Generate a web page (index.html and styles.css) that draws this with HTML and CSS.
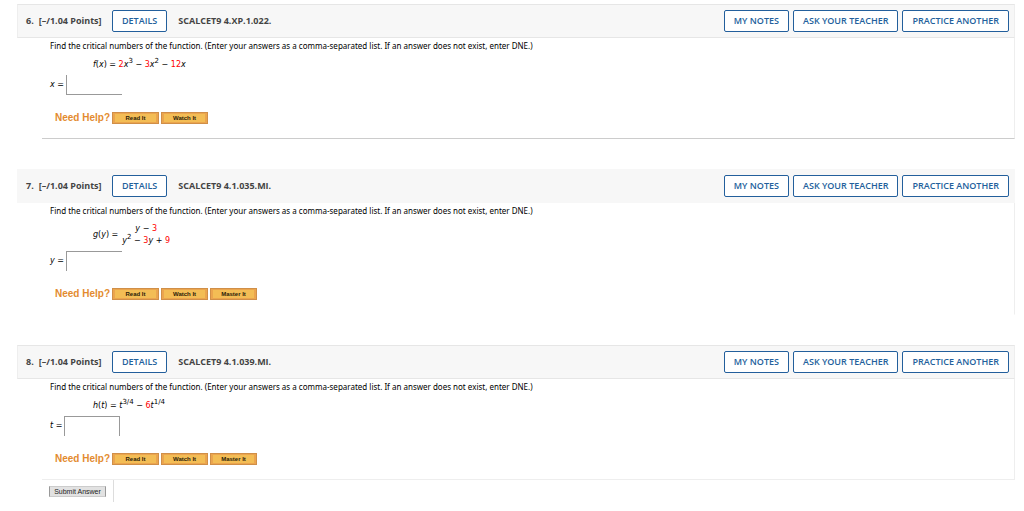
FILE: index.html
```html
<!DOCTYPE html>
<html lang="en">
  <head>
    <meta charset="UTF-8" />
    <meta name="viewport" content="width=device-width, initial-scale=1.0" />
    <title>Critical Numbers</title>
    <link rel="stylesheet" href="styles.css">
  </head>
  <body>
    <form class="assignment">
      <section class="question">
        <header class="question-header">
          <h2 class="points"><span class="number">6.</span>[–/1.04 Points]</h2>
          <button type="button" class="btn">DETAILS</button>
          <h3 class="source">SCALCET9 4.XP.1.022.</h3>
          <div class="actions">
            <button type="button" class="btn">MY NOTES</button>
            <button type="button" class="btn">ASK YOUR TEACHER</button>
            <button type="button" class="btn">PRACTICE ANOTHER</button>
          </div>
        </header>
        <div class="question-body line-dark">
          <p>Find the critical numbers of the function. (Enter your answers as a comma-separated list. If an answer does not exist, enter DNE.)</p>
          <div class="formula"><i>f</i>(<i>x</i>) = <b>2</b><i>x</i><sup>3</sup> − <b>3</b><i>x</i><sup>2</sup> − <b>12</b><i>x</i></div>
          <div class="answer">
            <label for="answer6"><i>x</i> =</label>
            <input type="text" id="answer6" class="edge-bottom" />
          </div>
          <div class="help">
            <span class="help-title">Need Help?</span>
            <button type="button" class="help-btn">Read It</button>
            <button type="button" class="help-btn">Watch It</button>
          </div>
        </div>
      </section>

      <section class="question">
        <header class="question-header no-line">
          <h2 class="points"><span class="number">7.</span>[–/1.04 Points]</h2>
          <button type="button" class="btn">DETAILS</button>
          <h3 class="source">SCALCET9 4.1.035.MI.</h3>
          <div class="actions">
            <button type="button" class="btn">MY NOTES</button>
            <button type="button" class="btn">ASK YOUR TEACHER</button>
            <button type="button" class="btn">PRACTICE ANOTHER</button>
          </div>
        </header>
        <div class="question-body line-none">
          <p>Find the critical numbers of the function. (Enter your answers as a comma-separated list. If an answer does not exist, enter DNE.)</p>
          <div class="formula formula-fraction">
            <span><i>g</i>(<i>y</i>) =</span>
            <span class="fraction">
              <span><i>y</i> − <b>3</b></span>
              <span><i>y</i><sup>2</sup> − <b>3</b><i>y</i> + <b>9</b></span>
            </span>
          </div>
          <div class="answer">
            <label for="answer7"><i>y</i> =</label>
            <input type="text" id="answer7" class="edge-top" />
          </div>
          <div class="help">
            <span class="help-title">Need Help?</span>
            <button type="button" class="help-btn">Read It</button>
            <button type="button" class="help-btn">Watch It</button>
            <button type="button" class="help-btn">Master It</button>
          </div>
        </div>
      </section>

      <section class="question">
        <header class="question-header">
          <h2 class="points"><span class="number">8.</span>[–/1.04 Points]</h2>
          <button type="button" class="btn">DETAILS</button>
          <h3 class="source">SCALCET9 4.1.039.MI.</h3>
          <div class="actions">
            <button type="button" class="btn">MY NOTES</button>
            <button type="button" class="btn">ASK YOUR TEACHER</button>
            <button type="button" class="btn">PRACTICE ANOTHER</button>
          </div>
        </header>
        <div class="question-body">
          <p>Find the critical numbers of the function. (Enter your answers as a comma-separated list. If an answer does not exist, enter DNE.)</p>
          <div class="formula"><i>h</i>(<i>t</i>) = <i>t</i><sup>3/4</sup> − <b>6</b><i>t</i><sup>1/4</sup></div>
          <div class="answer">
            <label for="answer8"><i>t</i> =</label>
            <input type="text" id="answer8" class="edge-top edge-right" />
          </div>
          <div class="help">
            <span class="help-title">Need Help?</span>
            <button type="button" class="help-btn">Read It</button>
            <button type="button" class="help-btn">Watch It</button>
            <button type="button" class="help-btn">Master It</button>
          </div>
        </div>
        <div class="submit">
          <button type="submit" class="submit-btn">Submit Answer</button>
        </div>
      </section>
    </form>
  </body>
</html>
```
FILE: styles.css
```css
* {
  padding: 0;
  margin: 0;
  box-sizing: border-box;
}

body {
  padding: 4px 9px 8px 17px;
  background: #fff;
  color: #000;
  font-family: "Noto Sans", Verdana, sans-serif;
  font-size: 8px;
  line-height: 12px;
}

.assignment {
  display: flex;
  flex-direction: column;
  gap: 30px;
}

.question-header {
  display: flex;
  align-items: center;
  height: 34px;
  padding: 0 5px 0 8px;
  background: #f7f7f7;
  border: 1px solid #e6e6e6;
  border-left-color: #eee;
  border-right-color: #eee;
  font-family: "Open Sans", sans-serif;
  color: #444;
}

.question-header.no-line {
  border-color: #f7f7f7;
}

.points,
.source {
  font-size: 9px;
  font-weight: 700;
}

.points {
  width: 86px;
}

.number {
  margin-right: 5px;
}

.btn {
  height: 22px;
  padding: 0 9px;
  background: #fff;
  border: 1px solid #235f9c;
  border-radius: 2px;
  color: #235f9c;
  font-family: "Open Sans", sans-serif;
  font-size: 9px;
  font-weight: 600;
  line-height: 18px;
  cursor: pointer;
}

.source {
  margin-left: 11px;
}

.actions {
  display: flex;
  gap: 4px;
  margin-left: auto;
}

.question-body {
  margin-left: 25px;
  padding: 2px 8px 14px;
  border-right: 1px solid #eee;
  border-bottom: 1px solid #eee;
}

.question-body.line-dark {
  border-bottom-color: #ccc;
}

.question-body.line-none {
  border-bottom-color: #fff;
}

.formula,
.answer {
  font-family: Verdana, "DejaVu Sans", sans-serif;
}

.formula {
  margin-top: 7px;
  padding-left: 43px;
}

.formula b {
  color: #f00;
  font-weight: 400;
}

sup {
  font-size: 7px;
  line-height: 0;
}

.formula-fraction {
  display: flex;
  align-items: center;
  gap: 4px;
  margin-top: 6px;
}

.fraction {
  display: flex;
  flex-direction: column;
  align-items: center;
}

.answer {
  display: flex;
  align-items: center;
  gap: 2px;
  margin-top: 4px;
}

.answer input {
  width: 56px;
  height: 20px;
  padding: 0 3px;
  border: 0 solid #999;
  border-left-width: 1px;
  background: #fff;
  font-family: inherit;
  font-size: 8px;
}

.answer .edge-top {
  border-top-width: 1px;
}

.answer .edge-bottom {
  border-bottom-width: 1px;
}

.answer .edge-right {
  border-right-width: 1px;
}

.help {
  display: flex;
  align-items: center;
  gap: 2px;
  margin-top: 17px;
  padding-left: 5px;
  font-family: Arial, "Liberation Sans", sans-serif;
}

.help-title {
  width: 55px;
  color: #e38b2f;
  font-size: 10px;
  font-weight: 700;
}

.help-btn {
  width: 47px;
  height: 12px;
  background: #f3bd55;
  border: 1px solid #d08f48;
  box-shadow: inset 2px 1px 0 #eba54e, inset -2px -1px 0 #eba54e;
  color: #2b1c08;
  font-family: inherit;
  font-size: 6px;
  font-weight: 700;
  line-height: 10px;
  cursor: pointer;
}

.submit {
  width: 72px;
  margin-left: 25px;
  padding: 6px 7px 5px;
  border-right: 1px solid #ddd;
  line-height: 0;
}

.submit-btn {
  width: 57px;
  height: 11px;
  background: #e2e2e2;
  border: 1px solid #ccc;
  border-left-color: #999;
  border-right-color: #999;
  color: #222;
  font-family: Arial, "Liberation Sans", sans-serif;
  font-size: 7px;
  line-height: 9px;
}
```
